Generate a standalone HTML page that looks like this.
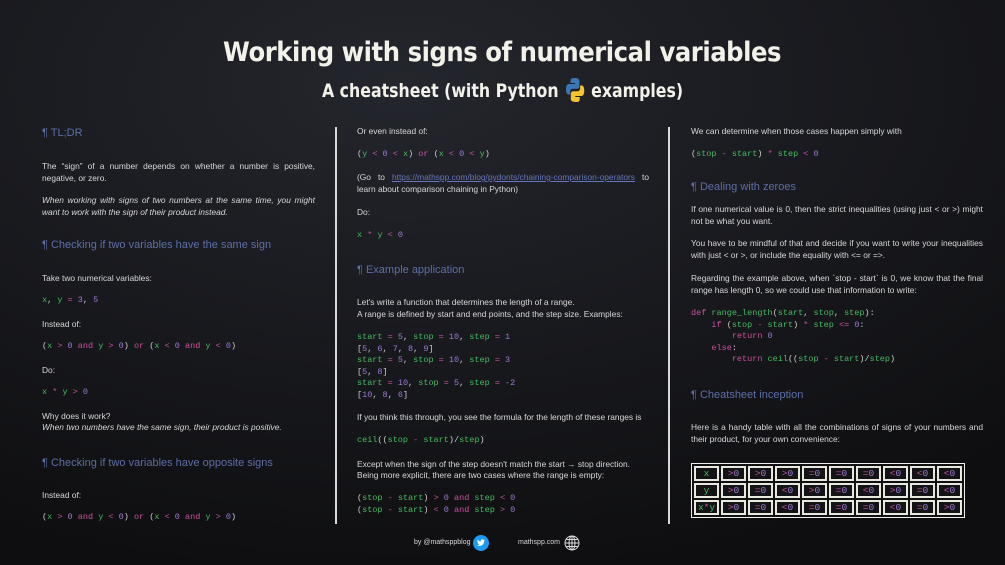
<!DOCTYPE html>
<html><head><meta charset="utf-8"><style>
*{margin:0;padding:0;box-sizing:border-box}
body{width:1005px;height:565px;overflow:hidden;position:relative;background:radial-gradient(ellipse 900px 500px at 40% 15%,#24262d 0%,#1a1b20 45%,#0e0e10 100%);font-family:"Liberation Sans",sans-serif;color:#d8d8d8}
.a{position:absolute;white-space:nowrap;font-size:8.4px;line-height:10px}
.j{position:absolute;font-size:8.4px;line-height:11.5px;text-align:justify;text-align-last:left}
.h{position:absolute;white-space:nowrap;font-size:11px;line-height:13px;color:#5d6ea6}
.c{position:absolute;white-space:pre;font-family:"Liberation Mono",monospace;font-size:8.5px;line-height:11.5px;color:#cfcfcf}
.g{color:#44bb5e}.p{color:#9d7bd8}.k{color:#c9529d}
i{font-style:italic}
.div{position:absolute;width:2px;background:#d8d8d8;top:127px;height:397px}
.title{position:absolute;left:0;width:1005px;text-align:center;color:#f2f2ea;font-weight:bold;font-family:"DejaVu Sans",sans-serif}
table{position:absolute;left:691px;top:463px;border-collapse:separate;border-spacing:2px;background:#111;border:1px solid #eee}
td{border:2px solid #e8e8e0;width:25px;height:15px;line-height:11px;text-align:center;font-family:"Liberation Mono",monospace;font-size:9.5px;color:#9d7bd8;background:#141416;padding:0}
</style></head><body>
<div class="title" style="top:37px;font-size:27px;letter-spacing:-0.5px"><span style="display:inline-block;transform:scaleX(0.9)">Working with signs of numerical variables</span></div>
<div class="title" style="top:77px;font-size:19px"><span style="display:inline-block;transform:scaleX(0.83)">A cheatsheet (with Python <svg width="26" height="26" viewBox="0 0 26 26" style="vertical-align:-6px"><path d="M12.5 1C7 1 7.5 3.3 7.5 3.3V6h5.3v1H5.5S2 6.6 2 12.2s3 5.3 3 5.3h2v-2.7s-.1-3 3-3h5.2s3 .1 3-2.8V4.2S18.7 1 12.5 1z" fill="#3a78b5"/><path d="M13.5 25c5.5 0 5-2.3 5-2.3V20h-5.3v-1h7.3s3.5.4 3.5-5.2-3-5.3-3-5.3h-2v2.7s.1 3-3 3H10.8s-3-.1-3 2.8v4.8S7.3 25 13.5 25z" fill="#f5c531"/></svg> examples)</span></div>

<div class="div" style="left:335px"></div>
<div class="div" style="left:668px"></div>

<!-- left -->
<div class="h" style="left:42px;top:127px">¶ TL;DR</div>
<div class="j" style="left:42px;top:161px;width:273px">The “sign” of a number depends on whether a number is positive, negative, or zero.</div>
<div class="j" style="left:42px;top:195px;width:273px"><i>When working with signs of two numbers at the same time, you might want to work with the sign of their product instead.</i></div>
<div class="h" style="left:42px;top:239px">¶ Checking if two variables have the same sign</div>
<div class="a" style="left:42px;top:273px">Take two numerical variables:</div>
<div class="c" style="left:42px;top:295px"><span class="g">x</span>, <span class="g">y</span> <span class="k">=</span> <span class="p">3</span>, <span class="p">5</span></div>
<div class="a" style="left:42px;top:319px">Instead of:</div>
<div class="c" style="left:42px;top:341px">(<span class="g">x</span> <span class="k">&gt;</span> <span class="p">0</span> <span class="k">and</span> <span class="g">y</span> <span class="k">&gt;</span> <span class="p">0</span>) <span class="k">or</span> (<span class="g">x</span> <span class="k">&lt;</span> <span class="p">0</span> <span class="k">and</span> <span class="g">y</span> <span class="k">&lt;</span> <span class="p">0</span>)</div>
<div class="a" style="left:42px;top:365px">Do:</div>
<div class="c" style="left:42px;top:387px"><span class="g">x</span> <span class="k">*</span> <span class="g">y</span> <span class="k">&gt;</span> <span class="p">0</span></div>
<div class="a" style="left:42px;top:411px">Why does it work?</div>
<div class="a" style="left:42px;top:422px"><i>When two numbers have the same sign, their product is positive.</i></div>
<div class="h" style="left:42px;top:457px">¶ Checking if two variables have opposite signs</div>
<div class="a" style="left:42px;top:490px">Instead of:</div>
<div class="c" style="left:42px;top:512px">(<span class="g">x</span> <span class="k">&gt;</span> <span class="p">0</span> <span class="k">and</span> <span class="g">y</span> <span class="k">&lt;</span> <span class="p">0</span>) <span class="k">or</span> (<span class="g">x</span> <span class="k">&lt;</span> <span class="p">0</span> <span class="k">and</span> <span class="g">y</span> <span class="k">&gt;</span> <span class="p">0</span>)</div>

<!-- middle -->
<div class="a" style="left:357px;top:126px">Or even instead of:</div>
<div class="c" style="left:357px;top:149px">(<span class="g">y</span> <span class="k">&lt;</span> <span class="p">0</span> <span class="k">&lt;</span> <span class="g">x</span>) <span class="k">or</span> (<span class="g">x</span> <span class="k">&lt;</span> <span class="p">0</span> <span class="k">&lt;</span> <span class="g">y</span>)</div>
<div class="j" style="left:357px;top:172px;width:292px">(Go to <span style="color:#6677bb;text-decoration:underline">https://mathspp.com/blog/pydonts/chaining-comparison-operators</span> to learn about comparison chaining in Python)</div>
<div class="a" style="left:357px;top:207px">Do:</div>
<div class="c" style="left:357px;top:230px"><span class="g">x</span> <span class="k">*</span> <span class="g">y</span> <span class="k">&lt;</span> <span class="p">0</span></div>
<div class="h" style="left:357px;top:264px">¶ Example application</div>
<div class="a" style="left:357px;top:297px">Let's write a function that determines the length of a range.</div>
<div class="a" style="left:357px;top:309px">A range is defined by start and end points, and the step size. Examples:</div>
<div class="c" style="left:357px;top:332px"><span class="g">start</span> <span class="k">=</span> <span class="p">5</span>, <span class="g">stop</span> <span class="k">=</span> <span class="p">10</span>, <span class="g">step</span> <span class="k">=</span> <span class="p">1</span>
[<span class="p">5</span>, <span class="p">6</span>, <span class="p">7</span>, <span class="p">8</span>, <span class="p">9</span>]
<span class="g">start</span> <span class="k">=</span> <span class="p">5</span>, <span class="g">stop</span> <span class="k">=</span> <span class="p">10</span>, <span class="g">step</span> <span class="k">=</span> <span class="p">3</span>
[<span class="p">5</span>, <span class="p">8</span>]
<span class="g">start</span> <span class="k">=</span> <span class="p">10</span>, <span class="g">stop</span> <span class="k">=</span> <span class="p">5</span>, <span class="g">step</span> <span class="k">=</span> <span class="p">-2</span>
[<span class="p">10</span>, <span class="p">8</span>, <span class="p">6</span>]</div>
<div class="a" style="left:357px;top:412px">If you think this through, you see the formula for the length of these ranges is</div>
<div class="c" style="left:357px;top:435px"><span class="g">ceil</span>((<span class="g">stop</span> <span class="k">-</span> <span class="g">start</span>)/<span class="g">step</span>)</div>
<div class="a" style="left:357px;top:459px">Except when the sign of the step doesn't match the start → stop direction.</div>
<div class="a" style="left:357px;top:470px">Being more explicit, there are two cases where the range is empty:</div>
<div class="c" style="left:357px;top:493px">(<span class="g">stop</span> <span class="k">-</span> <span class="g">start</span>) <span class="k">&gt;</span> <span class="p">0</span> <span class="k">and</span> <span class="g">step</span> <span class="k">&lt;</span> <span class="p">0</span>
(<span class="g">stop</span> <span class="k">-</span> <span class="g">start</span>) <span class="k">&lt;</span> <span class="p">0</span> <span class="k">and</span> <span class="g">step</span> <span class="k">&gt;</span> <span class="p">0</span></div>

<!-- right -->
<div class="a" style="left:691px;top:126px">We can determine when those cases happen simply with</div>
<div class="c" style="left:691px;top:149px">(<span class="g">stop</span> <span class="k">-</span> <span class="g">start</span>) <span class="k">*</span> <span class="g">step</span> <span class="k">&lt;</span> <span class="p">0</span></div>
<div class="h" style="left:691px;top:181px">¶ Dealing with zeroes</div>
<div class="j" style="left:691px;top:204px;width:292px">If one numerical value is 0, then the strict inequalities (using just &lt; or &gt;) might not be what you want.</div>
<div class="j" style="left:691px;top:238px;width:292px">You have to be mindful of that and decide if you want to write your inequalities with just &lt; or &gt;, or include the equality with &lt;= or =&gt;.</div>
<div class="j" style="left:691px;top:273px;width:292px">Regarding the example above, when `stop - start` is 0, we know that the final range has length 0, so we could use that information to write:</div>
<div class="c" style="left:691px;top:308px"><span class="k">def</span> <span class="g">range_length</span>(<span class="g">start</span>, <span class="g">stop</span>, <span class="g">step</span>):
    <span class="k">if</span> (<span class="g">stop</span> <span class="k">-</span> <span class="g">start</span>) <span class="k">*</span> <span class="g">step</span> <span class="k">&lt;=</span> <span class="p">0</span>:
        <span class="k">return</span> <span class="p">0</span>
    <span class="k">else</span>:
        <span class="k">return</span> <span class="g">ceil</span>((<span class="g">stop</span> <span class="k">-</span> <span class="g">start</span>)/<span class="g">step</span>)</div>
<div class="h" style="left:691px;top:389px">¶ Cheatsheet inception</div>
<div class="j" style="left:691px;top:422px;width:292px">Here is a handy table with all the combinations of signs of your numbers and their product, for your own convenience:</div>
<table>
<tr><td class="g">x</td><td><span class="k">&gt;</span>0</td><td><span class="k">&gt;</span>0</td><td><span class="k">&gt;</span>0</td><td><span class="k">=</span>0</td><td><span class="k">=</span>0</td><td><span class="k">=</span>0</td><td><span class="k">&lt;</span>0</td><td><span class="k">&lt;</span>0</td><td><span class="k">&lt;</span>0</td></tr>
<tr><td class="g">y</td><td><span class="k">&gt;</span>0</td><td><span class="k">=</span>0</td><td><span class="k">&lt;</span>0</td><td><span class="k">&gt;</span>0</td><td><span class="k">=</span>0</td><td><span class="k">&lt;</span>0</td><td><span class="k">&gt;</span>0</td><td><span class="k">=</span>0</td><td><span class="k">&lt;</span>0</td></tr>
<tr><td class="g">x<span class="k">*</span>y</td><td><span class="k">&gt;</span>0</td><td><span class="k">=</span>0</td><td><span class="k">&lt;</span>0</td><td><span class="k">=</span>0</td><td><span class="k">=</span>0</td><td><span class="k">=</span>0</td><td><span class="k">&lt;</span>0</td><td><span class="k">=</span>0</td><td><span class="k">&gt;</span>0</td></tr>
</table>

<!-- footer -->
<div class="a" style="left:414px;top:538px;font-size:7px">by @mathsppblog</div>
<svg style="position:absolute;left:473px;top:535px" width="16" height="16" viewBox="0 0 16 16"><circle cx="8" cy="8" r="8" fill="#1d9bf0"/><path d="M12 5.2c-.3.1-.6.2-1 .3.3-.2.6-.5.7-.9-.3.2-.7.3-1 .4a1.6 1.6 0 0 0-2.8 1.5A4.6 4.6 0 0 1 4.6 4.8a1.6 1.6 0 0 0 .5 2.2c-.3 0-.5-.1-.7-.2 0 .8.6 1.4 1.3 1.6-.2.1-.5.1-.7 0 .2.6.8 1.1 1.5 1.1A3.300 3.300 0 0 1 4 10.2 4.6 4.6 0 0 0 11.1 6.3v-.2c.4-.3.7-.6.9-.9z" fill="#fff"/></svg>
<div class="a" style="left:518px;top:538px;font-size:7px">mathspp.com</div>
<svg style="position:absolute;left:564px;top:535px" width="16" height="16" viewBox="0 0 16 16" fill="none" stroke="#ddd" stroke-width="1"><circle cx="8" cy="8" r="7"/><ellipse cx="8" cy="8" rx="3" ry="7"/><path d="M1 8h14M2 4.5h12M2 11.5h12M8 1v14"/></svg>
</body></html>
